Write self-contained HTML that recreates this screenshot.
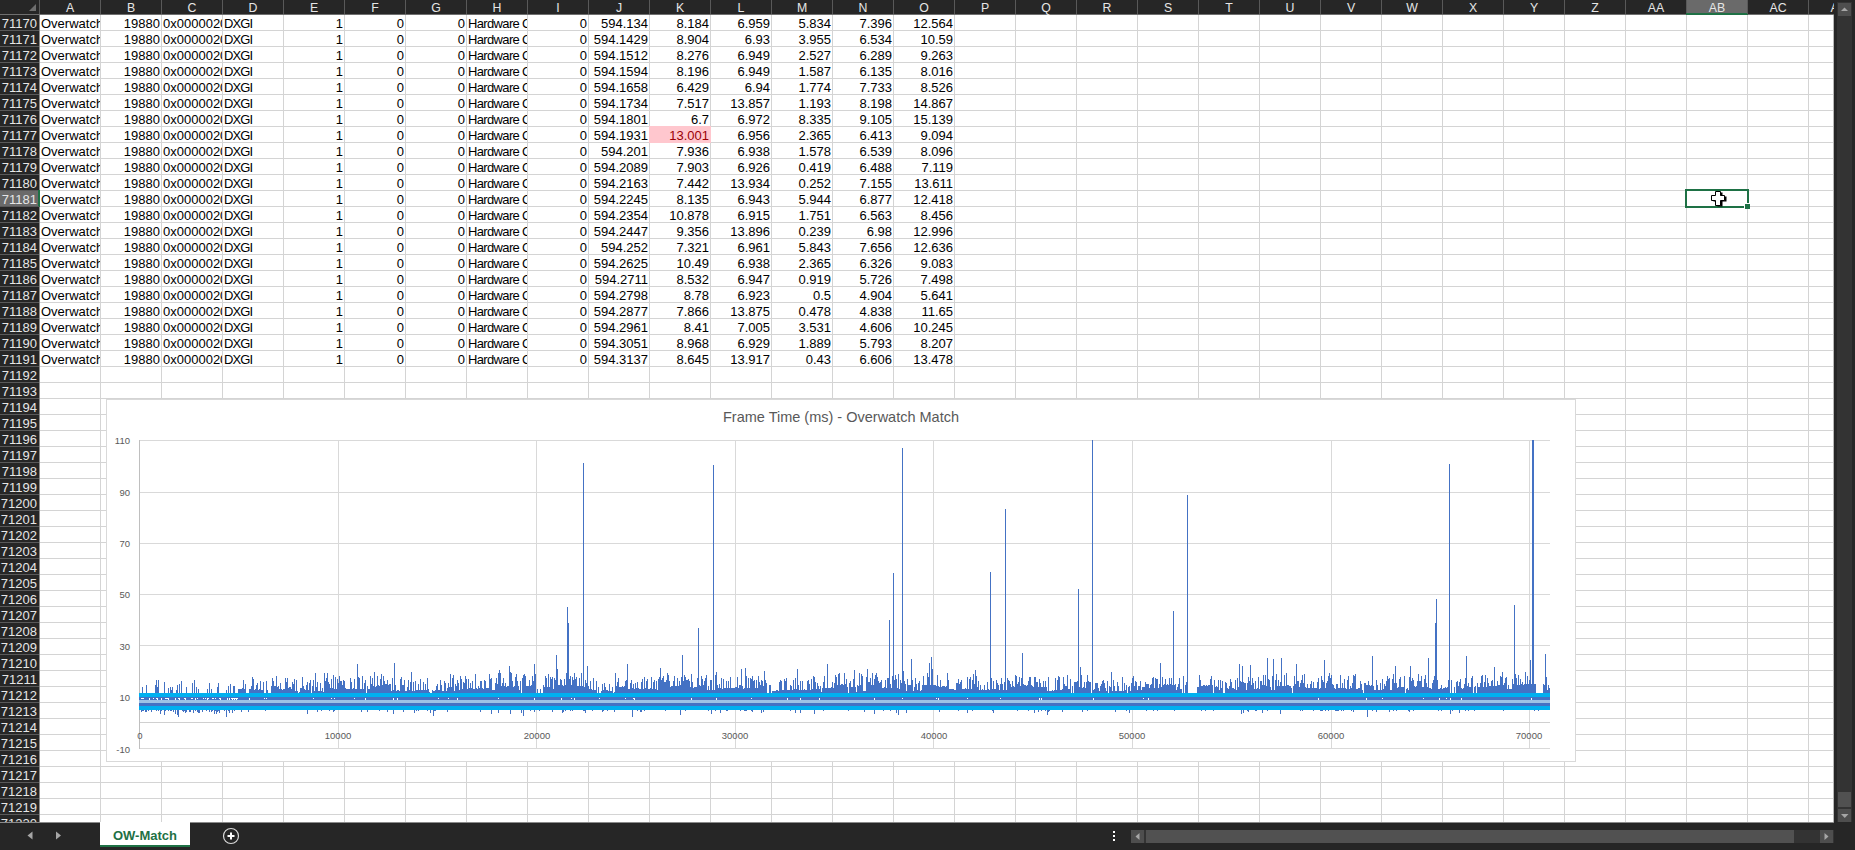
<!DOCTYPE html><html><head><meta charset="utf-8"><style>
*{margin:0;padding:0;box-sizing:border-box}
body{width:1855px;height:850px;overflow:hidden;position:relative;background:#262626;font-family:"Liberation Sans",sans-serif}
.a{position:absolute}
.c{position:absolute;height:16px;line-height:16px;font-size:13px;color:#000;white-space:nowrap;overflow:hidden}
.r{text-align:right}
.ch{position:absolute;top:1px;height:14px;line-height:14px;font-size:12.3px;color:#e6e6e6;text-align:center}
.rh{position:absolute;left:0;width:37px;height:16px;line-height:16px;font-size:13px;color:#e6e6e6;text-align:right}

</style></head><body>
<div class="a" style="left:40px;top:15px;width:1794px;height:807px;background-color:#fff;background-image:linear-gradient(to right,#d4d4d4 1px,transparent 1px),linear-gradient(to bottom,#d4d4d4 1px,transparent 1px);background-size:61px 16px;background-position:60px 15px"></div>
<div class="a" style="left:0;top:0;width:1834px;height:14px;background:#262626"></div>
<div class="a" style="left:0;top:14px;width:1834px;height:1px;background:#6f6f6f"></div>
<div class="a" style="left:39px;top:0;width:1px;height:14px;background:#595959"></div>
<div class="ch" style="left:40px;width:60px;overflow:hidden;clip-path:inset(0 0px 0 0)">A</div>
<div class="a" style="left:100px;top:0;width:1px;height:14px;background:#595959"></div>
<div class="ch" style="left:101px;width:60px;overflow:hidden;clip-path:inset(0 0px 0 0)">B</div>
<div class="a" style="left:161px;top:0;width:1px;height:14px;background:#595959"></div>
<div class="ch" style="left:162px;width:60px;overflow:hidden;clip-path:inset(0 0px 0 0)">C</div>
<div class="a" style="left:222px;top:0;width:1px;height:14px;background:#595959"></div>
<div class="ch" style="left:223px;width:60px;overflow:hidden;clip-path:inset(0 0px 0 0)">D</div>
<div class="a" style="left:283px;top:0;width:1px;height:14px;background:#595959"></div>
<div class="ch" style="left:284px;width:60px;overflow:hidden;clip-path:inset(0 0px 0 0)">E</div>
<div class="a" style="left:344px;top:0;width:1px;height:14px;background:#595959"></div>
<div class="ch" style="left:345px;width:60px;overflow:hidden;clip-path:inset(0 0px 0 0)">F</div>
<div class="a" style="left:405px;top:0;width:1px;height:14px;background:#595959"></div>
<div class="ch" style="left:406px;width:60px;overflow:hidden;clip-path:inset(0 0px 0 0)">G</div>
<div class="a" style="left:466px;top:0;width:1px;height:14px;background:#595959"></div>
<div class="ch" style="left:467px;width:60px;overflow:hidden;clip-path:inset(0 0px 0 0)">H</div>
<div class="a" style="left:527px;top:0;width:1px;height:14px;background:#595959"></div>
<div class="ch" style="left:528px;width:60px;overflow:hidden;clip-path:inset(0 0px 0 0)">I</div>
<div class="a" style="left:588px;top:0;width:1px;height:14px;background:#595959"></div>
<div class="ch" style="left:589px;width:60px;overflow:hidden;clip-path:inset(0 0px 0 0)">J</div>
<div class="a" style="left:649px;top:0;width:1px;height:14px;background:#595959"></div>
<div class="ch" style="left:650px;width:60px;overflow:hidden;clip-path:inset(0 0px 0 0)">K</div>
<div class="a" style="left:710px;top:0;width:1px;height:14px;background:#595959"></div>
<div class="ch" style="left:711px;width:60px;overflow:hidden;clip-path:inset(0 0px 0 0)">L</div>
<div class="a" style="left:771px;top:0;width:1px;height:14px;background:#595959"></div>
<div class="ch" style="left:772px;width:60px;overflow:hidden;clip-path:inset(0 0px 0 0)">M</div>
<div class="a" style="left:832px;top:0;width:1px;height:14px;background:#595959"></div>
<div class="ch" style="left:833px;width:60px;overflow:hidden;clip-path:inset(0 0px 0 0)">N</div>
<div class="a" style="left:893px;top:0;width:1px;height:14px;background:#595959"></div>
<div class="ch" style="left:894px;width:60px;overflow:hidden;clip-path:inset(0 0px 0 0)">O</div>
<div class="a" style="left:954px;top:0;width:1px;height:14px;background:#595959"></div>
<div class="ch" style="left:955px;width:60px;overflow:hidden;clip-path:inset(0 0px 0 0)">P</div>
<div class="a" style="left:1015px;top:0;width:1px;height:14px;background:#595959"></div>
<div class="ch" style="left:1016px;width:60px;overflow:hidden;clip-path:inset(0 0px 0 0)">Q</div>
<div class="a" style="left:1076px;top:0;width:1px;height:14px;background:#595959"></div>
<div class="ch" style="left:1077px;width:60px;overflow:hidden;clip-path:inset(0 0px 0 0)">R</div>
<div class="a" style="left:1137px;top:0;width:1px;height:14px;background:#595959"></div>
<div class="ch" style="left:1138px;width:60px;overflow:hidden;clip-path:inset(0 0px 0 0)">S</div>
<div class="a" style="left:1198px;top:0;width:1px;height:14px;background:#595959"></div>
<div class="ch" style="left:1199px;width:60px;overflow:hidden;clip-path:inset(0 0px 0 0)">T</div>
<div class="a" style="left:1259px;top:0;width:1px;height:14px;background:#595959"></div>
<div class="ch" style="left:1260px;width:60px;overflow:hidden;clip-path:inset(0 0px 0 0)">U</div>
<div class="a" style="left:1320px;top:0;width:1px;height:14px;background:#595959"></div>
<div class="ch" style="left:1321px;width:60px;overflow:hidden;clip-path:inset(0 0px 0 0)">V</div>
<div class="a" style="left:1381px;top:0;width:1px;height:14px;background:#595959"></div>
<div class="ch" style="left:1382px;width:60px;overflow:hidden;clip-path:inset(0 0px 0 0)">W</div>
<div class="a" style="left:1442px;top:0;width:1px;height:14px;background:#595959"></div>
<div class="ch" style="left:1443px;width:60px;overflow:hidden;clip-path:inset(0 0px 0 0)">X</div>
<div class="a" style="left:1503px;top:0;width:1px;height:14px;background:#595959"></div>
<div class="ch" style="left:1504px;width:60px;overflow:hidden;clip-path:inset(0 0px 0 0)">Y</div>
<div class="a" style="left:1564px;top:0;width:1px;height:14px;background:#595959"></div>
<div class="ch" style="left:1565px;width:60px;overflow:hidden;clip-path:inset(0 0px 0 0)">Z</div>
<div class="a" style="left:1625px;top:0;width:1px;height:14px;background:#595959"></div>
<div class="ch" style="left:1626px;width:60px;overflow:hidden;clip-path:inset(0 0px 0 0)">AA</div>
<div class="a" style="left:1686px;top:0;width:1px;height:14px;background:#595959"></div>
<div class="a" style="left:1687px;top:0;width:60px;height:13px;background:#6a6a6a"></div>
<div class="a" style="left:1686px;top:13px;width:62px;height:2px;background:#1e7145"></div>
<div class="ch" style="left:1687px;width:60px;overflow:hidden;clip-path:inset(0 0px 0 0)">AB</div>
<div class="a" style="left:1747px;top:0;width:1px;height:14px;background:#595959"></div>
<div class="ch" style="left:1748px;width:60px;overflow:hidden;clip-path:inset(0 0px 0 0)">AC</div>
<div class="a" style="left:1808px;top:0;width:1px;height:14px;background:#595959"></div>
<div class="ch" style="left:1809px;width:60px;overflow:hidden;clip-path:inset(0 35px 0 0)">AD</div>
<svg class="a" style="left:0;top:0" width="39" height="14"><polygon points="36,4 36,11 29,11" fill="#6e6e6e"/></svg>
<div class="a" style="left:0;top:15px;width:39px;height:807px;background:#262626"></div>
<div class="a" style="left:39px;top:15px;width:1px;height:807px;background:#8a8a8a"></div>
<div class="a" style="left:0;top:30px;width:39px;height:1px;background:#595959"></div>
<div class="rh" style="top:16px">71170</div>
<div class="a" style="left:0;top:46px;width:39px;height:1px;background:#595959"></div>
<div class="rh" style="top:32px">71171</div>
<div class="a" style="left:0;top:62px;width:39px;height:1px;background:#595959"></div>
<div class="rh" style="top:48px">71172</div>
<div class="a" style="left:0;top:78px;width:39px;height:1px;background:#595959"></div>
<div class="rh" style="top:64px">71173</div>
<div class="a" style="left:0;top:94px;width:39px;height:1px;background:#595959"></div>
<div class="rh" style="top:80px">71174</div>
<div class="a" style="left:0;top:110px;width:39px;height:1px;background:#595959"></div>
<div class="rh" style="top:96px">71175</div>
<div class="a" style="left:0;top:126px;width:39px;height:1px;background:#595959"></div>
<div class="rh" style="top:112px">71176</div>
<div class="a" style="left:0;top:142px;width:39px;height:1px;background:#595959"></div>
<div class="rh" style="top:128px">71177</div>
<div class="a" style="left:0;top:158px;width:39px;height:1px;background:#595959"></div>
<div class="rh" style="top:144px">71178</div>
<div class="a" style="left:0;top:174px;width:39px;height:1px;background:#595959"></div>
<div class="rh" style="top:160px">71179</div>
<div class="a" style="left:0;top:190px;width:39px;height:1px;background:#595959"></div>
<div class="rh" style="top:176px">71180</div>
<div class="a" style="left:0;top:191px;width:38px;height:15px;background:#6a6a6a"></div>
<div class="a" style="left:38px;top:190px;width:2px;height:17px;background:#1e7145"></div>
<div class="a" style="left:0;top:206px;width:39px;height:1px;background:#595959"></div>
<div class="rh" style="top:192px">71181</div>
<div class="a" style="left:0;top:222px;width:39px;height:1px;background:#595959"></div>
<div class="rh" style="top:208px">71182</div>
<div class="a" style="left:0;top:238px;width:39px;height:1px;background:#595959"></div>
<div class="rh" style="top:224px">71183</div>
<div class="a" style="left:0;top:254px;width:39px;height:1px;background:#595959"></div>
<div class="rh" style="top:240px">71184</div>
<div class="a" style="left:0;top:270px;width:39px;height:1px;background:#595959"></div>
<div class="rh" style="top:256px">71185</div>
<div class="a" style="left:0;top:286px;width:39px;height:1px;background:#595959"></div>
<div class="rh" style="top:272px">71186</div>
<div class="a" style="left:0;top:302px;width:39px;height:1px;background:#595959"></div>
<div class="rh" style="top:288px">71187</div>
<div class="a" style="left:0;top:318px;width:39px;height:1px;background:#595959"></div>
<div class="rh" style="top:304px">71188</div>
<div class="a" style="left:0;top:334px;width:39px;height:1px;background:#595959"></div>
<div class="rh" style="top:320px">71189</div>
<div class="a" style="left:0;top:350px;width:39px;height:1px;background:#595959"></div>
<div class="rh" style="top:336px">71190</div>
<div class="a" style="left:0;top:366px;width:39px;height:1px;background:#595959"></div>
<div class="rh" style="top:352px">71191</div>
<div class="a" style="left:0;top:382px;width:39px;height:1px;background:#595959"></div>
<div class="rh" style="top:368px">71192</div>
<div class="a" style="left:0;top:398px;width:39px;height:1px;background:#595959"></div>
<div class="rh" style="top:384px">71193</div>
<div class="a" style="left:0;top:414px;width:39px;height:1px;background:#595959"></div>
<div class="rh" style="top:400px">71194</div>
<div class="a" style="left:0;top:430px;width:39px;height:1px;background:#595959"></div>
<div class="rh" style="top:416px">71195</div>
<div class="a" style="left:0;top:446px;width:39px;height:1px;background:#595959"></div>
<div class="rh" style="top:432px">71196</div>
<div class="a" style="left:0;top:462px;width:39px;height:1px;background:#595959"></div>
<div class="rh" style="top:448px">71197</div>
<div class="a" style="left:0;top:478px;width:39px;height:1px;background:#595959"></div>
<div class="rh" style="top:464px">71198</div>
<div class="a" style="left:0;top:494px;width:39px;height:1px;background:#595959"></div>
<div class="rh" style="top:480px">71199</div>
<div class="a" style="left:0;top:510px;width:39px;height:1px;background:#595959"></div>
<div class="rh" style="top:496px">71200</div>
<div class="a" style="left:0;top:526px;width:39px;height:1px;background:#595959"></div>
<div class="rh" style="top:512px">71201</div>
<div class="a" style="left:0;top:542px;width:39px;height:1px;background:#595959"></div>
<div class="rh" style="top:528px">71202</div>
<div class="a" style="left:0;top:558px;width:39px;height:1px;background:#595959"></div>
<div class="rh" style="top:544px">71203</div>
<div class="a" style="left:0;top:574px;width:39px;height:1px;background:#595959"></div>
<div class="rh" style="top:560px">71204</div>
<div class="a" style="left:0;top:590px;width:39px;height:1px;background:#595959"></div>
<div class="rh" style="top:576px">71205</div>
<div class="a" style="left:0;top:606px;width:39px;height:1px;background:#595959"></div>
<div class="rh" style="top:592px">71206</div>
<div class="a" style="left:0;top:622px;width:39px;height:1px;background:#595959"></div>
<div class="rh" style="top:608px">71207</div>
<div class="a" style="left:0;top:638px;width:39px;height:1px;background:#595959"></div>
<div class="rh" style="top:624px">71208</div>
<div class="a" style="left:0;top:654px;width:39px;height:1px;background:#595959"></div>
<div class="rh" style="top:640px">71209</div>
<div class="a" style="left:0;top:670px;width:39px;height:1px;background:#595959"></div>
<div class="rh" style="top:656px">71210</div>
<div class="a" style="left:0;top:686px;width:39px;height:1px;background:#595959"></div>
<div class="rh" style="top:672px">71211</div>
<div class="a" style="left:0;top:702px;width:39px;height:1px;background:#595959"></div>
<div class="rh" style="top:688px">71212</div>
<div class="a" style="left:0;top:718px;width:39px;height:1px;background:#595959"></div>
<div class="rh" style="top:704px">71213</div>
<div class="a" style="left:0;top:734px;width:39px;height:1px;background:#595959"></div>
<div class="rh" style="top:720px">71214</div>
<div class="a" style="left:0;top:750px;width:39px;height:1px;background:#595959"></div>
<div class="rh" style="top:736px">71215</div>
<div class="a" style="left:0;top:766px;width:39px;height:1px;background:#595959"></div>
<div class="rh" style="top:752px">71216</div>
<div class="a" style="left:0;top:782px;width:39px;height:1px;background:#595959"></div>
<div class="rh" style="top:768px">71217</div>
<div class="a" style="left:0;top:798px;width:39px;height:1px;background:#595959"></div>
<div class="rh" style="top:784px">71218</div>
<div class="a" style="left:0;top:814px;width:39px;height:1px;background:#595959"></div>
<div class="rh" style="top:800px">71219</div>
<div class="a" style="left:0;top:830px;width:39px;height:1px;background:#595959"></div>
<div class="rh" style="top:816px">71220</div>
<div class="c" style="top:16px;left:40px;width:60px;padding-left:1px;">Overwatch.exe</div>
<div class="c r" style="top:16px;left:101px;width:60px;padding-right:1px;">19880</div>
<div class="c" style="top:16px;left:162px;width:60px;padding-left:1px;">0x0000020C</div>
<div class="c" style="top:16px;left:223px;width:60px;padding-left:1px;letter-spacing:-0.9px;">DXGI</div>
<div class="c r" style="top:16px;left:284px;width:60px;padding-right:1px;">1</div>
<div class="c r" style="top:16px;left:345px;width:60px;padding-right:1px;">0</div>
<div class="c r" style="top:16px;left:406px;width:60px;padding-right:1px;">0</div>
<div class="c" style="top:16px;left:467px;width:60px;padding-left:1px;letter-spacing:-0.65px;">Hardware Composed</div>
<div class="c r" style="top:16px;left:528px;width:60px;padding-right:1px;">0</div>
<div class="c r" style="top:16px;left:589px;width:60px;padding-right:1px;">594.134</div>
<div class="c r" style="top:16px;left:650px;width:60px;padding-right:1px;">8.184</div>
<div class="c r" style="top:16px;left:711px;width:60px;padding-right:1px;">6.959</div>
<div class="c r" style="top:16px;left:772px;width:60px;padding-right:1px;">5.834</div>
<div class="c r" style="top:16px;left:833px;width:60px;padding-right:1px;">7.396</div>
<div class="c r" style="top:16px;left:894px;width:60px;padding-right:1px;">12.564</div>
<div class="c" style="top:32px;left:40px;width:60px;padding-left:1px;">Overwatch.exe</div>
<div class="c r" style="top:32px;left:101px;width:60px;padding-right:1px;">19880</div>
<div class="c" style="top:32px;left:162px;width:60px;padding-left:1px;">0x0000020C</div>
<div class="c" style="top:32px;left:223px;width:60px;padding-left:1px;letter-spacing:-0.9px;">DXGI</div>
<div class="c r" style="top:32px;left:284px;width:60px;padding-right:1px;">1</div>
<div class="c r" style="top:32px;left:345px;width:60px;padding-right:1px;">0</div>
<div class="c r" style="top:32px;left:406px;width:60px;padding-right:1px;">0</div>
<div class="c" style="top:32px;left:467px;width:60px;padding-left:1px;letter-spacing:-0.65px;">Hardware Composed</div>
<div class="c r" style="top:32px;left:528px;width:60px;padding-right:1px;">0</div>
<div class="c r" style="top:32px;left:589px;width:60px;padding-right:1px;">594.1429</div>
<div class="c r" style="top:32px;left:650px;width:60px;padding-right:1px;">8.904</div>
<div class="c r" style="top:32px;left:711px;width:60px;padding-right:1px;">6.93</div>
<div class="c r" style="top:32px;left:772px;width:60px;padding-right:1px;">3.955</div>
<div class="c r" style="top:32px;left:833px;width:60px;padding-right:1px;">6.534</div>
<div class="c r" style="top:32px;left:894px;width:60px;padding-right:1px;">10.59</div>
<div class="c" style="top:48px;left:40px;width:60px;padding-left:1px;">Overwatch.exe</div>
<div class="c r" style="top:48px;left:101px;width:60px;padding-right:1px;">19880</div>
<div class="c" style="top:48px;left:162px;width:60px;padding-left:1px;">0x0000020C</div>
<div class="c" style="top:48px;left:223px;width:60px;padding-left:1px;letter-spacing:-0.9px;">DXGI</div>
<div class="c r" style="top:48px;left:284px;width:60px;padding-right:1px;">1</div>
<div class="c r" style="top:48px;left:345px;width:60px;padding-right:1px;">0</div>
<div class="c r" style="top:48px;left:406px;width:60px;padding-right:1px;">0</div>
<div class="c" style="top:48px;left:467px;width:60px;padding-left:1px;letter-spacing:-0.65px;">Hardware Composed</div>
<div class="c r" style="top:48px;left:528px;width:60px;padding-right:1px;">0</div>
<div class="c r" style="top:48px;left:589px;width:60px;padding-right:1px;">594.1512</div>
<div class="c r" style="top:48px;left:650px;width:60px;padding-right:1px;">8.276</div>
<div class="c r" style="top:48px;left:711px;width:60px;padding-right:1px;">6.949</div>
<div class="c r" style="top:48px;left:772px;width:60px;padding-right:1px;">2.527</div>
<div class="c r" style="top:48px;left:833px;width:60px;padding-right:1px;">6.289</div>
<div class="c r" style="top:48px;left:894px;width:60px;padding-right:1px;">9.263</div>
<div class="c" style="top:64px;left:40px;width:60px;padding-left:1px;">Overwatch.exe</div>
<div class="c r" style="top:64px;left:101px;width:60px;padding-right:1px;">19880</div>
<div class="c" style="top:64px;left:162px;width:60px;padding-left:1px;">0x0000020C</div>
<div class="c" style="top:64px;left:223px;width:60px;padding-left:1px;letter-spacing:-0.9px;">DXGI</div>
<div class="c r" style="top:64px;left:284px;width:60px;padding-right:1px;">1</div>
<div class="c r" style="top:64px;left:345px;width:60px;padding-right:1px;">0</div>
<div class="c r" style="top:64px;left:406px;width:60px;padding-right:1px;">0</div>
<div class="c" style="top:64px;left:467px;width:60px;padding-left:1px;letter-spacing:-0.65px;">Hardware Composed</div>
<div class="c r" style="top:64px;left:528px;width:60px;padding-right:1px;">0</div>
<div class="c r" style="top:64px;left:589px;width:60px;padding-right:1px;">594.1594</div>
<div class="c r" style="top:64px;left:650px;width:60px;padding-right:1px;">8.196</div>
<div class="c r" style="top:64px;left:711px;width:60px;padding-right:1px;">6.949</div>
<div class="c r" style="top:64px;left:772px;width:60px;padding-right:1px;">1.587</div>
<div class="c r" style="top:64px;left:833px;width:60px;padding-right:1px;">6.135</div>
<div class="c r" style="top:64px;left:894px;width:60px;padding-right:1px;">8.016</div>
<div class="c" style="top:80px;left:40px;width:60px;padding-left:1px;">Overwatch.exe</div>
<div class="c r" style="top:80px;left:101px;width:60px;padding-right:1px;">19880</div>
<div class="c" style="top:80px;left:162px;width:60px;padding-left:1px;">0x0000020C</div>
<div class="c" style="top:80px;left:223px;width:60px;padding-left:1px;letter-spacing:-0.9px;">DXGI</div>
<div class="c r" style="top:80px;left:284px;width:60px;padding-right:1px;">1</div>
<div class="c r" style="top:80px;left:345px;width:60px;padding-right:1px;">0</div>
<div class="c r" style="top:80px;left:406px;width:60px;padding-right:1px;">0</div>
<div class="c" style="top:80px;left:467px;width:60px;padding-left:1px;letter-spacing:-0.65px;">Hardware Composed</div>
<div class="c r" style="top:80px;left:528px;width:60px;padding-right:1px;">0</div>
<div class="c r" style="top:80px;left:589px;width:60px;padding-right:1px;">594.1658</div>
<div class="c r" style="top:80px;left:650px;width:60px;padding-right:1px;">6.429</div>
<div class="c r" style="top:80px;left:711px;width:60px;padding-right:1px;">6.94</div>
<div class="c r" style="top:80px;left:772px;width:60px;padding-right:1px;">1.774</div>
<div class="c r" style="top:80px;left:833px;width:60px;padding-right:1px;">7.733</div>
<div class="c r" style="top:80px;left:894px;width:60px;padding-right:1px;">8.526</div>
<div class="c" style="top:96px;left:40px;width:60px;padding-left:1px;">Overwatch.exe</div>
<div class="c r" style="top:96px;left:101px;width:60px;padding-right:1px;">19880</div>
<div class="c" style="top:96px;left:162px;width:60px;padding-left:1px;">0x0000020C</div>
<div class="c" style="top:96px;left:223px;width:60px;padding-left:1px;letter-spacing:-0.9px;">DXGI</div>
<div class="c r" style="top:96px;left:284px;width:60px;padding-right:1px;">1</div>
<div class="c r" style="top:96px;left:345px;width:60px;padding-right:1px;">0</div>
<div class="c r" style="top:96px;left:406px;width:60px;padding-right:1px;">0</div>
<div class="c" style="top:96px;left:467px;width:60px;padding-left:1px;letter-spacing:-0.65px;">Hardware Composed</div>
<div class="c r" style="top:96px;left:528px;width:60px;padding-right:1px;">0</div>
<div class="c r" style="top:96px;left:589px;width:60px;padding-right:1px;">594.1734</div>
<div class="c r" style="top:96px;left:650px;width:60px;padding-right:1px;">7.517</div>
<div class="c r" style="top:96px;left:711px;width:60px;padding-right:1px;">13.857</div>
<div class="c r" style="top:96px;left:772px;width:60px;padding-right:1px;">1.193</div>
<div class="c r" style="top:96px;left:833px;width:60px;padding-right:1px;">8.198</div>
<div class="c r" style="top:96px;left:894px;width:60px;padding-right:1px;">14.867</div>
<div class="c" style="top:112px;left:40px;width:60px;padding-left:1px;">Overwatch.exe</div>
<div class="c r" style="top:112px;left:101px;width:60px;padding-right:1px;">19880</div>
<div class="c" style="top:112px;left:162px;width:60px;padding-left:1px;">0x0000020C</div>
<div class="c" style="top:112px;left:223px;width:60px;padding-left:1px;letter-spacing:-0.9px;">DXGI</div>
<div class="c r" style="top:112px;left:284px;width:60px;padding-right:1px;">1</div>
<div class="c r" style="top:112px;left:345px;width:60px;padding-right:1px;">0</div>
<div class="c r" style="top:112px;left:406px;width:60px;padding-right:1px;">0</div>
<div class="c" style="top:112px;left:467px;width:60px;padding-left:1px;letter-spacing:-0.65px;">Hardware Composed</div>
<div class="c r" style="top:112px;left:528px;width:60px;padding-right:1px;">0</div>
<div class="c r" style="top:112px;left:589px;width:60px;padding-right:1px;">594.1801</div>
<div class="c r" style="top:112px;left:650px;width:60px;padding-right:1px;">6.7</div>
<div class="c r" style="top:112px;left:711px;width:60px;padding-right:1px;">6.972</div>
<div class="c r" style="top:112px;left:772px;width:60px;padding-right:1px;">8.335</div>
<div class="c r" style="top:112px;left:833px;width:60px;padding-right:1px;">9.105</div>
<div class="c r" style="top:112px;left:894px;width:60px;padding-right:1px;">15.139</div>
<div class="c" style="top:128px;left:40px;width:60px;padding-left:1px;">Overwatch.exe</div>
<div class="c r" style="top:128px;left:101px;width:60px;padding-right:1px;">19880</div>
<div class="c" style="top:128px;left:162px;width:60px;padding-left:1px;">0x0000020C</div>
<div class="c" style="top:128px;left:223px;width:60px;padding-left:1px;letter-spacing:-0.9px;">DXGI</div>
<div class="c r" style="top:128px;left:284px;width:60px;padding-right:1px;">1</div>
<div class="c r" style="top:128px;left:345px;width:60px;padding-right:1px;">0</div>
<div class="c r" style="top:128px;left:406px;width:60px;padding-right:1px;">0</div>
<div class="c" style="top:128px;left:467px;width:60px;padding-left:1px;letter-spacing:-0.65px;">Hardware Composed</div>
<div class="c r" style="top:128px;left:528px;width:60px;padding-right:1px;">0</div>
<div class="c r" style="top:128px;left:589px;width:60px;padding-right:1px;">594.1931</div>
<div class="a" style="left:649px;top:126px;width:62px;height:17px;background:#ffc7ce"></div>
<div class="c r" style="top:128px;left:650px;width:60px;padding-right:1px;color:#9c0006;">13.001</div>
<div class="c r" style="top:128px;left:711px;width:60px;padding-right:1px;">6.956</div>
<div class="c r" style="top:128px;left:772px;width:60px;padding-right:1px;">2.365</div>
<div class="c r" style="top:128px;left:833px;width:60px;padding-right:1px;">6.413</div>
<div class="c r" style="top:128px;left:894px;width:60px;padding-right:1px;">9.094</div>
<div class="c" style="top:144px;left:40px;width:60px;padding-left:1px;">Overwatch.exe</div>
<div class="c r" style="top:144px;left:101px;width:60px;padding-right:1px;">19880</div>
<div class="c" style="top:144px;left:162px;width:60px;padding-left:1px;">0x0000020C</div>
<div class="c" style="top:144px;left:223px;width:60px;padding-left:1px;letter-spacing:-0.9px;">DXGI</div>
<div class="c r" style="top:144px;left:284px;width:60px;padding-right:1px;">1</div>
<div class="c r" style="top:144px;left:345px;width:60px;padding-right:1px;">0</div>
<div class="c r" style="top:144px;left:406px;width:60px;padding-right:1px;">0</div>
<div class="c" style="top:144px;left:467px;width:60px;padding-left:1px;letter-spacing:-0.65px;">Hardware Composed</div>
<div class="c r" style="top:144px;left:528px;width:60px;padding-right:1px;">0</div>
<div class="c r" style="top:144px;left:589px;width:60px;padding-right:1px;">594.201</div>
<div class="c r" style="top:144px;left:650px;width:60px;padding-right:1px;">7.936</div>
<div class="c r" style="top:144px;left:711px;width:60px;padding-right:1px;">6.938</div>
<div class="c r" style="top:144px;left:772px;width:60px;padding-right:1px;">1.578</div>
<div class="c r" style="top:144px;left:833px;width:60px;padding-right:1px;">6.539</div>
<div class="c r" style="top:144px;left:894px;width:60px;padding-right:1px;">8.096</div>
<div class="c" style="top:160px;left:40px;width:60px;padding-left:1px;">Overwatch.exe</div>
<div class="c r" style="top:160px;left:101px;width:60px;padding-right:1px;">19880</div>
<div class="c" style="top:160px;left:162px;width:60px;padding-left:1px;">0x0000020C</div>
<div class="c" style="top:160px;left:223px;width:60px;padding-left:1px;letter-spacing:-0.9px;">DXGI</div>
<div class="c r" style="top:160px;left:284px;width:60px;padding-right:1px;">1</div>
<div class="c r" style="top:160px;left:345px;width:60px;padding-right:1px;">0</div>
<div class="c r" style="top:160px;left:406px;width:60px;padding-right:1px;">0</div>
<div class="c" style="top:160px;left:467px;width:60px;padding-left:1px;letter-spacing:-0.65px;">Hardware Composed</div>
<div class="c r" style="top:160px;left:528px;width:60px;padding-right:1px;">0</div>
<div class="c r" style="top:160px;left:589px;width:60px;padding-right:1px;">594.2089</div>
<div class="c r" style="top:160px;left:650px;width:60px;padding-right:1px;">7.903</div>
<div class="c r" style="top:160px;left:711px;width:60px;padding-right:1px;">6.926</div>
<div class="c r" style="top:160px;left:772px;width:60px;padding-right:1px;">0.419</div>
<div class="c r" style="top:160px;left:833px;width:60px;padding-right:1px;">6.488</div>
<div class="c r" style="top:160px;left:894px;width:60px;padding-right:1px;">7.119</div>
<div class="c" style="top:176px;left:40px;width:60px;padding-left:1px;">Overwatch.exe</div>
<div class="c r" style="top:176px;left:101px;width:60px;padding-right:1px;">19880</div>
<div class="c" style="top:176px;left:162px;width:60px;padding-left:1px;">0x0000020C</div>
<div class="c" style="top:176px;left:223px;width:60px;padding-left:1px;letter-spacing:-0.9px;">DXGI</div>
<div class="c r" style="top:176px;left:284px;width:60px;padding-right:1px;">1</div>
<div class="c r" style="top:176px;left:345px;width:60px;padding-right:1px;">0</div>
<div class="c r" style="top:176px;left:406px;width:60px;padding-right:1px;">0</div>
<div class="c" style="top:176px;left:467px;width:60px;padding-left:1px;letter-spacing:-0.65px;">Hardware Composed</div>
<div class="c r" style="top:176px;left:528px;width:60px;padding-right:1px;">0</div>
<div class="c r" style="top:176px;left:589px;width:60px;padding-right:1px;">594.2163</div>
<div class="c r" style="top:176px;left:650px;width:60px;padding-right:1px;">7.442</div>
<div class="c r" style="top:176px;left:711px;width:60px;padding-right:1px;">13.934</div>
<div class="c r" style="top:176px;left:772px;width:60px;padding-right:1px;">0.252</div>
<div class="c r" style="top:176px;left:833px;width:60px;padding-right:1px;">7.155</div>
<div class="c r" style="top:176px;left:894px;width:60px;padding-right:1px;">13.611</div>
<div class="c" style="top:192px;left:40px;width:60px;padding-left:1px;">Overwatch.exe</div>
<div class="c r" style="top:192px;left:101px;width:60px;padding-right:1px;">19880</div>
<div class="c" style="top:192px;left:162px;width:60px;padding-left:1px;">0x0000020C</div>
<div class="c" style="top:192px;left:223px;width:60px;padding-left:1px;letter-spacing:-0.9px;">DXGI</div>
<div class="c r" style="top:192px;left:284px;width:60px;padding-right:1px;">1</div>
<div class="c r" style="top:192px;left:345px;width:60px;padding-right:1px;">0</div>
<div class="c r" style="top:192px;left:406px;width:60px;padding-right:1px;">0</div>
<div class="c" style="top:192px;left:467px;width:60px;padding-left:1px;letter-spacing:-0.65px;">Hardware Composed</div>
<div class="c r" style="top:192px;left:528px;width:60px;padding-right:1px;">0</div>
<div class="c r" style="top:192px;left:589px;width:60px;padding-right:1px;">594.2245</div>
<div class="c r" style="top:192px;left:650px;width:60px;padding-right:1px;">8.135</div>
<div class="c r" style="top:192px;left:711px;width:60px;padding-right:1px;">6.943</div>
<div class="c r" style="top:192px;left:772px;width:60px;padding-right:1px;">5.944</div>
<div class="c r" style="top:192px;left:833px;width:60px;padding-right:1px;">6.877</div>
<div class="c r" style="top:192px;left:894px;width:60px;padding-right:1px;">12.418</div>
<div class="c" style="top:208px;left:40px;width:60px;padding-left:1px;">Overwatch.exe</div>
<div class="c r" style="top:208px;left:101px;width:60px;padding-right:1px;">19880</div>
<div class="c" style="top:208px;left:162px;width:60px;padding-left:1px;">0x0000020C</div>
<div class="c" style="top:208px;left:223px;width:60px;padding-left:1px;letter-spacing:-0.9px;">DXGI</div>
<div class="c r" style="top:208px;left:284px;width:60px;padding-right:1px;">1</div>
<div class="c r" style="top:208px;left:345px;width:60px;padding-right:1px;">0</div>
<div class="c r" style="top:208px;left:406px;width:60px;padding-right:1px;">0</div>
<div class="c" style="top:208px;left:467px;width:60px;padding-left:1px;letter-spacing:-0.65px;">Hardware Composed</div>
<div class="c r" style="top:208px;left:528px;width:60px;padding-right:1px;">0</div>
<div class="c r" style="top:208px;left:589px;width:60px;padding-right:1px;">594.2354</div>
<div class="c r" style="top:208px;left:650px;width:60px;padding-right:1px;">10.878</div>
<div class="c r" style="top:208px;left:711px;width:60px;padding-right:1px;">6.915</div>
<div class="c r" style="top:208px;left:772px;width:60px;padding-right:1px;">1.751</div>
<div class="c r" style="top:208px;left:833px;width:60px;padding-right:1px;">6.563</div>
<div class="c r" style="top:208px;left:894px;width:60px;padding-right:1px;">8.456</div>
<div class="c" style="top:224px;left:40px;width:60px;padding-left:1px;">Overwatch.exe</div>
<div class="c r" style="top:224px;left:101px;width:60px;padding-right:1px;">19880</div>
<div class="c" style="top:224px;left:162px;width:60px;padding-left:1px;">0x0000020C</div>
<div class="c" style="top:224px;left:223px;width:60px;padding-left:1px;letter-spacing:-0.9px;">DXGI</div>
<div class="c r" style="top:224px;left:284px;width:60px;padding-right:1px;">1</div>
<div class="c r" style="top:224px;left:345px;width:60px;padding-right:1px;">0</div>
<div class="c r" style="top:224px;left:406px;width:60px;padding-right:1px;">0</div>
<div class="c" style="top:224px;left:467px;width:60px;padding-left:1px;letter-spacing:-0.65px;">Hardware Composed</div>
<div class="c r" style="top:224px;left:528px;width:60px;padding-right:1px;">0</div>
<div class="c r" style="top:224px;left:589px;width:60px;padding-right:1px;">594.2447</div>
<div class="c r" style="top:224px;left:650px;width:60px;padding-right:1px;">9.356</div>
<div class="c r" style="top:224px;left:711px;width:60px;padding-right:1px;">13.896</div>
<div class="c r" style="top:224px;left:772px;width:60px;padding-right:1px;">0.239</div>
<div class="c r" style="top:224px;left:833px;width:60px;padding-right:1px;">6.98</div>
<div class="c r" style="top:224px;left:894px;width:60px;padding-right:1px;">12.996</div>
<div class="c" style="top:240px;left:40px;width:60px;padding-left:1px;">Overwatch.exe</div>
<div class="c r" style="top:240px;left:101px;width:60px;padding-right:1px;">19880</div>
<div class="c" style="top:240px;left:162px;width:60px;padding-left:1px;">0x0000020C</div>
<div class="c" style="top:240px;left:223px;width:60px;padding-left:1px;letter-spacing:-0.9px;">DXGI</div>
<div class="c r" style="top:240px;left:284px;width:60px;padding-right:1px;">1</div>
<div class="c r" style="top:240px;left:345px;width:60px;padding-right:1px;">0</div>
<div class="c r" style="top:240px;left:406px;width:60px;padding-right:1px;">0</div>
<div class="c" style="top:240px;left:467px;width:60px;padding-left:1px;letter-spacing:-0.65px;">Hardware Composed</div>
<div class="c r" style="top:240px;left:528px;width:60px;padding-right:1px;">0</div>
<div class="c r" style="top:240px;left:589px;width:60px;padding-right:1px;">594.252</div>
<div class="c r" style="top:240px;left:650px;width:60px;padding-right:1px;">7.321</div>
<div class="c r" style="top:240px;left:711px;width:60px;padding-right:1px;">6.961</div>
<div class="c r" style="top:240px;left:772px;width:60px;padding-right:1px;">5.843</div>
<div class="c r" style="top:240px;left:833px;width:60px;padding-right:1px;">7.656</div>
<div class="c r" style="top:240px;left:894px;width:60px;padding-right:1px;">12.636</div>
<div class="c" style="top:256px;left:40px;width:60px;padding-left:1px;">Overwatch.exe</div>
<div class="c r" style="top:256px;left:101px;width:60px;padding-right:1px;">19880</div>
<div class="c" style="top:256px;left:162px;width:60px;padding-left:1px;">0x0000020C</div>
<div class="c" style="top:256px;left:223px;width:60px;padding-left:1px;letter-spacing:-0.9px;">DXGI</div>
<div class="c r" style="top:256px;left:284px;width:60px;padding-right:1px;">1</div>
<div class="c r" style="top:256px;left:345px;width:60px;padding-right:1px;">0</div>
<div class="c r" style="top:256px;left:406px;width:60px;padding-right:1px;">0</div>
<div class="c" style="top:256px;left:467px;width:60px;padding-left:1px;letter-spacing:-0.65px;">Hardware Composed</div>
<div class="c r" style="top:256px;left:528px;width:60px;padding-right:1px;">0</div>
<div class="c r" style="top:256px;left:589px;width:60px;padding-right:1px;">594.2625</div>
<div class="c r" style="top:256px;left:650px;width:60px;padding-right:1px;">10.49</div>
<div class="c r" style="top:256px;left:711px;width:60px;padding-right:1px;">6.938</div>
<div class="c r" style="top:256px;left:772px;width:60px;padding-right:1px;">2.365</div>
<div class="c r" style="top:256px;left:833px;width:60px;padding-right:1px;">6.326</div>
<div class="c r" style="top:256px;left:894px;width:60px;padding-right:1px;">9.083</div>
<div class="c" style="top:272px;left:40px;width:60px;padding-left:1px;">Overwatch.exe</div>
<div class="c r" style="top:272px;left:101px;width:60px;padding-right:1px;">19880</div>
<div class="c" style="top:272px;left:162px;width:60px;padding-left:1px;">0x0000020C</div>
<div class="c" style="top:272px;left:223px;width:60px;padding-left:1px;letter-spacing:-0.9px;">DXGI</div>
<div class="c r" style="top:272px;left:284px;width:60px;padding-right:1px;">1</div>
<div class="c r" style="top:272px;left:345px;width:60px;padding-right:1px;">0</div>
<div class="c r" style="top:272px;left:406px;width:60px;padding-right:1px;">0</div>
<div class="c" style="top:272px;left:467px;width:60px;padding-left:1px;letter-spacing:-0.65px;">Hardware Composed</div>
<div class="c r" style="top:272px;left:528px;width:60px;padding-right:1px;">0</div>
<div class="c r" style="top:272px;left:589px;width:60px;padding-right:1px;">594.2711</div>
<div class="c r" style="top:272px;left:650px;width:60px;padding-right:1px;">8.532</div>
<div class="c r" style="top:272px;left:711px;width:60px;padding-right:1px;">6.947</div>
<div class="c r" style="top:272px;left:772px;width:60px;padding-right:1px;">0.919</div>
<div class="c r" style="top:272px;left:833px;width:60px;padding-right:1px;">5.726</div>
<div class="c r" style="top:272px;left:894px;width:60px;padding-right:1px;">7.498</div>
<div class="c" style="top:288px;left:40px;width:60px;padding-left:1px;">Overwatch.exe</div>
<div class="c r" style="top:288px;left:101px;width:60px;padding-right:1px;">19880</div>
<div class="c" style="top:288px;left:162px;width:60px;padding-left:1px;">0x0000020C</div>
<div class="c" style="top:288px;left:223px;width:60px;padding-left:1px;letter-spacing:-0.9px;">DXGI</div>
<div class="c r" style="top:288px;left:284px;width:60px;padding-right:1px;">1</div>
<div class="c r" style="top:288px;left:345px;width:60px;padding-right:1px;">0</div>
<div class="c r" style="top:288px;left:406px;width:60px;padding-right:1px;">0</div>
<div class="c" style="top:288px;left:467px;width:60px;padding-left:1px;letter-spacing:-0.65px;">Hardware Composed</div>
<div class="c r" style="top:288px;left:528px;width:60px;padding-right:1px;">0</div>
<div class="c r" style="top:288px;left:589px;width:60px;padding-right:1px;">594.2798</div>
<div class="c r" style="top:288px;left:650px;width:60px;padding-right:1px;">8.78</div>
<div class="c r" style="top:288px;left:711px;width:60px;padding-right:1px;">6.923</div>
<div class="c r" style="top:288px;left:772px;width:60px;padding-right:1px;">0.5</div>
<div class="c r" style="top:288px;left:833px;width:60px;padding-right:1px;">4.904</div>
<div class="c r" style="top:288px;left:894px;width:60px;padding-right:1px;">5.641</div>
<div class="c" style="top:304px;left:40px;width:60px;padding-left:1px;">Overwatch.exe</div>
<div class="c r" style="top:304px;left:101px;width:60px;padding-right:1px;">19880</div>
<div class="c" style="top:304px;left:162px;width:60px;padding-left:1px;">0x0000020C</div>
<div class="c" style="top:304px;left:223px;width:60px;padding-left:1px;letter-spacing:-0.9px;">DXGI</div>
<div class="c r" style="top:304px;left:284px;width:60px;padding-right:1px;">1</div>
<div class="c r" style="top:304px;left:345px;width:60px;padding-right:1px;">0</div>
<div class="c r" style="top:304px;left:406px;width:60px;padding-right:1px;">0</div>
<div class="c" style="top:304px;left:467px;width:60px;padding-left:1px;letter-spacing:-0.65px;">Hardware Composed</div>
<div class="c r" style="top:304px;left:528px;width:60px;padding-right:1px;">0</div>
<div class="c r" style="top:304px;left:589px;width:60px;padding-right:1px;">594.2877</div>
<div class="c r" style="top:304px;left:650px;width:60px;padding-right:1px;">7.866</div>
<div class="c r" style="top:304px;left:711px;width:60px;padding-right:1px;">13.875</div>
<div class="c r" style="top:304px;left:772px;width:60px;padding-right:1px;">0.478</div>
<div class="c r" style="top:304px;left:833px;width:60px;padding-right:1px;">4.838</div>
<div class="c r" style="top:304px;left:894px;width:60px;padding-right:1px;">11.65</div>
<div class="c" style="top:320px;left:40px;width:60px;padding-left:1px;">Overwatch.exe</div>
<div class="c r" style="top:320px;left:101px;width:60px;padding-right:1px;">19880</div>
<div class="c" style="top:320px;left:162px;width:60px;padding-left:1px;">0x0000020C</div>
<div class="c" style="top:320px;left:223px;width:60px;padding-left:1px;letter-spacing:-0.9px;">DXGI</div>
<div class="c r" style="top:320px;left:284px;width:60px;padding-right:1px;">1</div>
<div class="c r" style="top:320px;left:345px;width:60px;padding-right:1px;">0</div>
<div class="c r" style="top:320px;left:406px;width:60px;padding-right:1px;">0</div>
<div class="c" style="top:320px;left:467px;width:60px;padding-left:1px;letter-spacing:-0.65px;">Hardware Composed</div>
<div class="c r" style="top:320px;left:528px;width:60px;padding-right:1px;">0</div>
<div class="c r" style="top:320px;left:589px;width:60px;padding-right:1px;">594.2961</div>
<div class="c r" style="top:320px;left:650px;width:60px;padding-right:1px;">8.41</div>
<div class="c r" style="top:320px;left:711px;width:60px;padding-right:1px;">7.005</div>
<div class="c r" style="top:320px;left:772px;width:60px;padding-right:1px;">3.531</div>
<div class="c r" style="top:320px;left:833px;width:60px;padding-right:1px;">4.606</div>
<div class="c r" style="top:320px;left:894px;width:60px;padding-right:1px;">10.245</div>
<div class="c" style="top:336px;left:40px;width:60px;padding-left:1px;">Overwatch.exe</div>
<div class="c r" style="top:336px;left:101px;width:60px;padding-right:1px;">19880</div>
<div class="c" style="top:336px;left:162px;width:60px;padding-left:1px;">0x0000020C</div>
<div class="c" style="top:336px;left:223px;width:60px;padding-left:1px;letter-spacing:-0.9px;">DXGI</div>
<div class="c r" style="top:336px;left:284px;width:60px;padding-right:1px;">1</div>
<div class="c r" style="top:336px;left:345px;width:60px;padding-right:1px;">0</div>
<div class="c r" style="top:336px;left:406px;width:60px;padding-right:1px;">0</div>
<div class="c" style="top:336px;left:467px;width:60px;padding-left:1px;letter-spacing:-0.65px;">Hardware Composed</div>
<div class="c r" style="top:336px;left:528px;width:60px;padding-right:1px;">0</div>
<div class="c r" style="top:336px;left:589px;width:60px;padding-right:1px;">594.3051</div>
<div class="c r" style="top:336px;left:650px;width:60px;padding-right:1px;">8.968</div>
<div class="c r" style="top:336px;left:711px;width:60px;padding-right:1px;">6.929</div>
<div class="c r" style="top:336px;left:772px;width:60px;padding-right:1px;">1.889</div>
<div class="c r" style="top:336px;left:833px;width:60px;padding-right:1px;">5.793</div>
<div class="c r" style="top:336px;left:894px;width:60px;padding-right:1px;">8.207</div>
<div class="c" style="top:352px;left:40px;width:60px;padding-left:1px;">Overwatch.exe</div>
<div class="c r" style="top:352px;left:101px;width:60px;padding-right:1px;">19880</div>
<div class="c" style="top:352px;left:162px;width:60px;padding-left:1px;">0x0000020C</div>
<div class="c" style="top:352px;left:223px;width:60px;padding-left:1px;letter-spacing:-0.9px;">DXGI</div>
<div class="c r" style="top:352px;left:284px;width:60px;padding-right:1px;">1</div>
<div class="c r" style="top:352px;left:345px;width:60px;padding-right:1px;">0</div>
<div class="c r" style="top:352px;left:406px;width:60px;padding-right:1px;">0</div>
<div class="c" style="top:352px;left:467px;width:60px;padding-left:1px;letter-spacing:-0.65px;">Hardware Composed</div>
<div class="c r" style="top:352px;left:528px;width:60px;padding-right:1px;">0</div>
<div class="c r" style="top:352px;left:589px;width:60px;padding-right:1px;">594.3137</div>
<div class="c r" style="top:352px;left:650px;width:60px;padding-right:1px;">8.645</div>
<div class="c r" style="top:352px;left:711px;width:60px;padding-right:1px;">13.917</div>
<div class="c r" style="top:352px;left:772px;width:60px;padding-right:1px;">0.43</div>
<div class="c r" style="top:352px;left:833px;width:60px;padding-right:1px;">6.606</div>
<div class="c r" style="top:352px;left:894px;width:60px;padding-right:1px;">13.478</div>
<div class="a" style="left:1685px;top:189px;width:64px;height:19px;border:2px solid #1e7145"></div>
<div class="a" style="left:1744px;top:203px;width:6px;height:6px;background:#fff"></div>
<div class="a" style="left:1745px;top:204px;width:5px;height:5px;background:#1e7145"></div>
<svg class="a" style="left:1708px;top:188px" width="22" height="22" viewBox="0 0 22 22"><path d="M8.5 3.5h5v4h4v5h-4v5h-5v-5h-4v-5h4z" fill="#000" transform="translate(1,1)"/><path d="M7.5 3.5h5v4h4v5h-4v5h-5v-5h-4v-5h4z" fill="#fff" stroke="#000" stroke-width="1"/></svg>
<div class="a" style="left:0;top:822px;width:1855px;height:28px;background:#262626"></div>
<div class="a" style="left:0;top:822px;width:1834px;height:1px;background:#8a8a8a"></div>
<div class="a" style="left:1833px;top:15px;width:1px;height:807px;background:#b8b8b8"></div>
<div class="a" style="left:100px;top:822px;width:90px;height:23px;background:#fff"></div>
<div class="a" style="left:100px;top:845px;width:90px;height:2px;background:#1e7145"></div>
<div class="a" style="left:100px;top:828px;width:90px;height:16px;line-height:16px;text-align:center;font-size:13px;font-weight:bold;color:#1e7145">OW-Match</div>
<svg class="a" style="left:0;top:823px" width="260" height="27"><polygon points="32.5,8.5 32.5,16.5 27.5,12.5" fill="#a6a6a6"/><polygon points="56,8.5 56,16.5 61,12.5" fill="#a6a6a6"/><circle cx="231" cy="13" r="7.5" fill="none" stroke="#d9d9d9" stroke-width="1.2"/><path d="M231 9.5v7M227.5 13h7" stroke="#fff" stroke-width="2"/></svg>
<div class="a" style="left:1113px;top:831px;width:2px;height:2px;background:#fff"></div>
<div class="a" style="left:1113px;top:835px;width:2px;height:2px;background:#fff"></div>
<div class="a" style="left:1113px;top:839px;width:2px;height:2px;background:#fff"></div>
<div class="a" style="left:1131px;top:830px;width:703px;height:13px;background:#333"></div>
<div class="a" style="left:1131px;top:830px;width:13px;height:13px;background:#4e4e4e"></div>
<div class="a" style="left:1146px;top:830px;width:648px;height:13px;background:#515151"></div>
<div class="a" style="left:1820px;top:830px;width:13px;height:13px;background:#4e4e4e"></div>
<svg class="a" style="left:1131px;top:830px" width="703" height="13"><polygon points="8.5,3 8.5,10 4.5,6.5" fill="#a6a6a6"/><polygon points="693.5,3 693.5,10 697.5,6.5" fill="#a6a6a6"/></svg>
<div class="a" style="left:1837px;top:2px;width:15px;height:820px;background:#333"></div>
<div class="a" style="left:1838px;top:3px;width:13px;height:13px;background:#4e4e4e"></div>
<div class="a" style="left:1838px;top:792px;width:13px;height:15px;background:#515151"></div>
<div class="a" style="left:1838px;top:809px;width:13px;height:13px;background:#4e4e4e"></div>
<svg class="a" style="left:1838px;top:3px" width="13" height="819"><polygon points="3,8 10,8 6.5,4.5" fill="#a6a6a6"/><polygon points="3,811 10.5,811 6.75,815" fill="#a6a6a6"/></svg>
<div class="a" style="left:106px;top:399px;width:1470px;height:363px;background:#fff;border:1px solid #d9d9d9"></div>
<div class="a" style="left:106px;top:409px;width:1470px;text-align:center;font-size:14.5px;line-height:16px;color:#595959">Frame Time (ms) - Overwatch Match</div>
<svg class="a" style="left:0;top:0" width="1855" height="850" shape-rendering="crispEdges">
<line x1="139" y1="440.5" x2="1550" y2="440.5" stroke="#d9d9d9" stroke-width="1"/>
<line x1="139" y1="492.5" x2="1550" y2="492.5" stroke="#d9d9d9" stroke-width="1"/>
<line x1="139" y1="543.5" x2="1550" y2="543.5" stroke="#d9d9d9" stroke-width="1"/>
<line x1="139" y1="594.5" x2="1550" y2="594.5" stroke="#d9d9d9" stroke-width="1"/>
<line x1="139" y1="645.5" x2="1550" y2="645.5" stroke="#d9d9d9" stroke-width="1"/>
<line x1="139" y1="697.5" x2="1550" y2="697.5" stroke="#d9d9d9" stroke-width="1"/>
<line x1="139" y1="748.5" x2="1550" y2="748.5" stroke="#d9d9d9" stroke-width="1"/>
<line x1="338.5" y1="440" x2="338.5" y2="749" stroke="#d9d9d9" stroke-width="1"/>
<line x1="536.5" y1="440" x2="536.5" y2="749" stroke="#d9d9d9" stroke-width="1"/>
<line x1="735.5" y1="440" x2="735.5" y2="749" stroke="#d9d9d9" stroke-width="1"/>
<line x1="933.5" y1="440" x2="933.5" y2="749" stroke="#d9d9d9" stroke-width="1"/>
<line x1="1132.5" y1="440" x2="1132.5" y2="749" stroke="#d9d9d9" stroke-width="1"/>
<line x1="1331.5" y1="440" x2="1331.5" y2="749" stroke="#d9d9d9" stroke-width="1"/>
<line x1="1529.5" y1="440" x2="1529.5" y2="749" stroke="#d9d9d9" stroke-width="1"/>
<line x1="139" y1="722.5" x2="1550" y2="722.5" stroke="#d0d0d0" stroke-width="1"/>
<line x1="139.5" y1="440" x2="139.5" y2="749" stroke="#bfbfbf" stroke-width="1"/>
<path d="M141.5 710V712 M142.5 693V687 M142.5 710V711 M143.5 710V711 M145.5 710V712 M146.5 693V685 M146.5 710V712 M148.5 710V711 M151.5 710V712 M155.5 693V685 M156.5 693V680 M156.5 710V711 M157.5 693V687 M158.5 693V680 M158.5 710V711 M160.5 710V714 M161.5 710V711 M164.5 693V682 M164.5 710V715 M165.5 710V711 M168.5 693V688 M168.5 710V711 M170.5 693V687 M170.5 710V711 M171.5 693V690 M171.5 710V711 M172.5 693V687 M173.5 710V712 M175.5 710V714 M176.5 693V690 M177.5 693V685 M177.5 710V715 M178.5 710V717 M179.5 693V684 M181.5 693V681 M182.5 710V711 M183.5 710V712 M184.5 710V711 M185.5 710V713 M186.5 693V687 M186.5 710V712 M189.5 710V712 M190.5 710V712 M192.5 693V683 M193.5 710V713 M194.5 693V680 M195.5 710V711 M196.5 693V687 M197.5 710V712 M198.5 693V689 M198.5 710V713 M199.5 710V713 M202.5 710V712 M206.5 710V711 M207.5 693V689 M209.5 693V683 M209.5 710V712 M211.5 693V689 M211.5 710V712 M212.5 710V711 M214.5 710V714 M215.5 710V711 M216.5 710V714 M217.5 693V687 M217.5 710V712 M218.5 693V683 M218.5 710V711 M219.5 710V713 M224.5 710V711 M226.5 693V690 M226.5 710V717 M228.5 693V686 M228.5 710V711 M229.5 710V713 M230.5 693V684 M232.5 710V713 M233.5 693V686 M234.5 693V686 M234.5 710V711 M238.5 693V689 M239.5 693V689 M240.5 693V689 M241.5 693V689 M241.5 710V712 M242.5 693V688 M243.5 693V680 M244.5 693V689 M245.5 693V684 M248.5 710V712 M249.5 693V689 M250.5 693V689 M251.5 693V686 M252.5 693V677 M253.5 693V679 M254.5 693V690 M255.5 693V689 M256.5 693V685 M257.5 693V683 M258.5 693V690 M259.5 693V689 M260.5 693V681 M261.5 693V690 M262.5 693V690 M263.5 693V682 M265.5 710V711 M266.5 693V681 M267.5 693V690 M271.5 693V686 M272.5 693V678 M273.5 693V681 M274.5 693V686 M275.5 693V686 M276.5 693V676 M277.5 693V687 M278.5 693V686 M279.5 693V689 M280.5 693V683 M281.5 693V689 M282.5 693V690 M283.5 693V689 M284.5 693V689 M285.5 693V678 M286.5 693V682 M287.5 693V678 M288.5 693V688 M289.5 693V687 M290.5 693V687 M291.5 693V689 M292.5 693V682 M293.5 693V684 M294.5 693V679 M295.5 693V691 M296.5 693V680 M297.5 693V691 M299.5 693V692 M300.5 693V688 M301.5 693V688 M302.5 693V677 M303.5 693V686 M304.5 693V689 M305.5 693V690 M306.5 693V685 M307.5 693V682 M307.5 710V714 M308.5 693V690 M309.5 693V683 M310.5 693V680 M312.5 693V686 M313.5 693V680 M314.5 693V691 M315.5 693V673 M316.5 693V687 M317.5 693V682 M317.5 710V712 M318.5 693V691 M319.5 693V691 M320.5 693V683 M321.5 693V691 M321.5 710V711 M322.5 693V688 M323.5 693V692 M324.5 693V673 M325.5 693V681 M326.5 693V678 M327.5 693V673 M328.5 693V682 M329.5 693V684 M329.5 710V711 M330.5 693V688 M331.5 693V679 M332.5 693V688 M333.5 693V675 M333.5 710V712 M334.5 693V689 M334.5 710V711 M335.5 693V677 M336.5 693V689 M337.5 693V679 M338.5 693V683 M339.5 693V676 M340.5 693V681 M341.5 693V681 M342.5 693V685 M343.5 693V680 M344.5 693V681 M345.5 693V688 M346.5 693V689 M347.5 693V689 M348.5 693V689 M349.5 693V689 M350.5 693V678 M351.5 693V682 M352.5 693V689 M353.5 693V688 M354.5 693V679 M355.5 693V689 M356.5 693V689 M357.5 693V664 M358.5 693V677 M359.5 693V678 M360.5 693V689 M361.5 693V689 M361.5 710V712 M362.5 693V676 M363.5 693V689 M364.5 693V683 M365.5 693V680 M367.5 693V686 M367.5 710V712 M368.5 693V689 M369.5 693V689 M370.5 693V676 M371.5 693V684 M372.5 693V678 M373.5 693V686 M374.5 693V672 M375.5 693V687 M376.5 693V686 M377.5 693V676 M378.5 693V685 M379.5 693V686 M379.5 710V711 M380.5 693V679 M381.5 693V674 M382.5 693V685 M383.5 693V676 M384.5 693V681 M385.5 693V684 M386.5 693V684 M387.5 693V680 M387.5 710V712 M388.5 693V685 M389.5 693V684 M390.5 693V684 M391.5 693V691 M392.5 693V678 M393.5 693V690 M393.5 710V714 M394.5 693V663 M395.5 693V685 M396.5 693V691 M397.5 693V690 M398.5 693V690 M399.5 693V691 M400.5 693V679 M401.5 693V677 M402.5 693V685 M403.5 693V685 M403.5 710V712 M404.5 693V680 M405.5 693V691 M406.5 693V691 M407.5 693V687 M408.5 693V680 M409.5 693V690 M410.5 693V682 M411.5 693V672 M412.5 693V691 M413.5 693V682 M414.5 693V691 M414.5 710V713 M415.5 693V681 M416.5 693V690 M416.5 710V711 M417.5 693V690 M418.5 693V684 M418.5 710V711 M419.5 693V690 M420.5 693V679 M421.5 693V690 M422.5 693V690 M423.5 693V682 M424.5 693V690 M425.5 693V684 M426.5 693V690 M427.5 693V678 M427.5 710V711 M428.5 693V689 M429.5 693V692 M430.5 710V713 M432.5 693V690 M433.5 693V691 M433.5 710V716 M434.5 693V691 M434.5 710V711 M435.5 693V690 M435.5 710V711 M436.5 693V686 M437.5 693V684 M438.5 693V690 M439.5 693V690 M440.5 693V680 M441.5 693V685 M442.5 693V691 M443.5 693V691 M444.5 693V681 M445.5 693V683 M446.5 693V691 M447.5 693V688 M447.5 710V712 M448.5 693V683 M449.5 693V687 M450.5 693V674 M451.5 693V687 M452.5 693V678 M453.5 693V675 M454.5 693V691 M455.5 693V684 M456.5 693V686 M457.5 693V680 M458.5 693V683 M459.5 693V690 M460.5 693V676 M461.5 693V679 M462.5 693V689 M463.5 693V682 M464.5 693V683 M465.5 693V676 M466.5 693V679 M467.5 693V689 M468.5 693V679 M469.5 693V688 M470.5 693V683 M471.5 693V688 M472.5 693V681 M473.5 693V689 M474.5 693V689 M475.5 693V674 M476.5 693V688 M477.5 693V689 M478.5 693V686 M479.5 693V688 M480.5 693V681 M480.5 710V712 M481.5 693V681 M482.5 693V688 M483.5 693V689 M484.5 693V680 M485.5 693V681 M486.5 693V688 M487.5 693V688 M488.5 693V688 M489.5 693V674 M490.5 693V679 M491.5 693V678 M491.5 710V714 M492.5 693V690 M493.5 693V690 M494.5 693V690 M495.5 693V683 M496.5 693V678 M497.5 693V684 M498.5 693V673 M498.5 710V713 M499.5 693V670 M500.5 693V673 M501.5 693V686 M502.5 693V683 M503.5 693V678 M504.5 693V686 M505.5 693V683 M506.5 693V687 M507.5 693V686 M508.5 693V686 M509.5 693V666 M510.5 693V672 M510.5 710V714 M511.5 693V673 M512.5 693V681 M513.5 693V687 M514.5 693V686 M515.5 693V677 M516.5 693V674 M517.5 693V681 M518.5 693V686 M519.5 693V690 M520.5 693V681 M521.5 710V713 M522.5 693V678 M523.5 693V675 M523.5 710V716 M524.5 693V674 M525.5 693V676 M526.5 693V686 M527.5 693V686 M528.5 693V686 M529.5 693V680 M530.5 693V686 M530.5 710V711 M531.5 693V685 M532.5 693V676 M533.5 693V681 M534.5 693V664 M534.5 710V712 M535.5 693V674 M537.5 693V689 M539.5 710V711 M540.5 693V689 M543.5 693V685 M544.5 693V687 M545.5 693V676 M546.5 693V678 M547.5 693V687 M548.5 693V674 M549.5 693V687 M550.5 693V677 M551.5 693V679 M552.5 693V677 M552.5 710V712 M553.5 693V689 M554.5 693V678 M555.5 693V680 M556.5 693V686 M557.5 693V669 M558.5 693V685 M559.5 693V685 M560.5 693V679 M561.5 693V680 M562.5 693V685 M562.5 710V713 M563.5 693V686 M563.5 710V712 M564.5 693V679 M565.5 693V685 M565.5 710V711 M566.5 693V673 M567.5 693V686 M568.5 693V681 M569.5 693V679 M570.5 693V676 M570.5 710V711 M571.5 693V685 M572.5 693V677 M572.5 710V711 M573.5 693V680 M574.5 693V673 M575.5 693V679 M576.5 693V677 M577.5 693V686 M578.5 693V686 M579.5 693V678 M580.5 693V686 M581.5 693V673 M582.5 693V686 M583.5 693V686 M583.5 710V711 M584.5 693V687 M584.5 710V711 M585.5 693V680 M585.5 710V713 M586.5 693V683 M587.5 693V666 M588.5 693V686 M589.5 693V689 M590.5 693V681 M591.5 693V689 M592.5 693V690 M592.5 710V711 M593.5 693V678 M594.5 693V690 M595.5 693V690 M596.5 693V681 M598.5 693V687 M601.5 693V691 M602.5 693V684 M602.5 710V712 M603.5 693V690 M603.5 710V711 M604.5 693V683 M605.5 693V687 M606.5 693V690 M607.5 693V690 M607.5 710V711 M608.5 693V691 M609.5 693V684 M610.5 693V691 M611.5 693V691 M612.5 693V687 M614.5 693V692 M614.5 710V712 M615.5 693V673 M616.5 693V686 M617.5 693V682 M618.5 693V678 M619.5 693V687 M620.5 693V687 M621.5 693V687 M622.5 693V686 M623.5 693V687 M624.5 693V686 M625.5 693V681 M626.5 693V680 M627.5 693V677 M628.5 693V689 M629.5 693V689 M630.5 693V683 M631.5 693V680 M632.5 693V688 M632.5 710V717 M633.5 693V684 M634.5 693V689 M635.5 693V683 M636.5 693V688 M637.5 693V682 M637.5 710V711 M638.5 693V688 M639.5 693V689 M640.5 693V689 M640.5 710V712 M641.5 693V682 M641.5 710V712 M642.5 693V679 M643.5 693V689 M644.5 693V677 M644.5 710V711 M645.5 693V688 M646.5 693V681 M647.5 693V679 M648.5 693V689 M649.5 693V689 M650.5 693V688 M651.5 693V677 M652.5 693V689 M653.5 693V682 M654.5 693V680 M655.5 693V689 M656.5 693V681 M657.5 693V690 M658.5 693V679 M659.5 693V677 M660.5 693V668 M661.5 693V680 M662.5 693V678 M663.5 693V676 M664.5 693V682 M665.5 693V682 M665.5 710V711 M666.5 693V680 M667.5 693V673 M668.5 693V675 M669.5 693V681 M670.5 693V687 M671.5 693V686 M672.5 693V686 M673.5 693V681 M674.5 693V676 M675.5 693V686 M676.5 693V686 M677.5 693V678 M678.5 693V686 M679.5 693V681 M680.5 693V685 M680.5 710V715 M681.5 693V677 M682.5 693V667 M683.5 693V681 M684.5 693V675 M685.5 693V677 M685.5 710V711 M686.5 693V680 M687.5 693V680 M688.5 693V679 M689.5 693V681 M690.5 693V687 M691.5 693V674 M692.5 693V682 M693.5 693V688 M694.5 693V687 M695.5 693V687 M696.5 693V687 M697.5 693V678 M698.5 693V675 M699.5 693V685 M700.5 693V686 M701.5 693V676 M702.5 693V679 M703.5 693V685 M704.5 693V681 M705.5 693V678 M706.5 693V675 M707.5 693V690 M708.5 693V686 M708.5 710V711 M709.5 693V690 M710.5 693V680 M711.5 693V680 M711.5 710V714 M712.5 693V690 M713.5 693V691 M714.5 693V690 M715.5 693V675 M715.5 710V711 M716.5 693V672 M717.5 693V685 M718.5 693V688 M719.5 693V684 M720.5 693V688 M720.5 710V713 M721.5 693V678 M722.5 693V689 M723.5 693V679 M724.5 693V688 M725.5 693V688 M726.5 693V681 M726.5 710V711 M727.5 693V688 M727.5 710V711 M728.5 693V681 M729.5 693V688 M730.5 693V677 M731.5 693V688 M732.5 693V688 M733.5 693V688 M734.5 693V688 M735.5 693V687 M736.5 693V687 M737.5 693V677 M738.5 693V688 M739.5 693V685 M740.5 693V685 M740.5 710V711 M741.5 693V669 M742.5 693V686 M743.5 693V689 M744.5 693V688 M744.5 710V711 M745.5 693V668 M745.5 710V711 M746.5 693V676 M746.5 710V711 M747.5 693V688 M748.5 693V678 M749.5 693V688 M750.5 693V678 M751.5 693V679 M751.5 710V711 M752.5 693V676 M752.5 710V712 M753.5 693V681 M754.5 693V680 M755.5 693V688 M756.5 693V680 M757.5 693V688 M758.5 693V676 M759.5 693V682 M760.5 693V685 M761.5 693V680 M761.5 710V713 M762.5 693V681 M763.5 693V686 M763.5 710V712 M764.5 693V671 M765.5 693V680 M766.5 693V683 M769.5 693V685 M770.5 693V685 M772.5 693V691 M773.5 693V691 M774.5 693V691 M775.5 693V691 M776.5 693V690 M777.5 693V690 M778.5 693V691 M779.5 693V682 M780.5 693V680 M781.5 693V681 M782.5 693V690 M783.5 693V690 M784.5 693V679 M785.5 693V681 M786.5 693V678 M787.5 693V690 M788.5 693V690 M789.5 693V690 M790.5 693V685 M790.5 710V711 M791.5 693V686 M792.5 693V690 M793.5 693V680 M794.5 693V689 M795.5 693V678 M795.5 710V713 M796.5 693V689 M797.5 693V669 M798.5 693V685 M799.5 693V690 M800.5 693V681 M800.5 710V713 M801.5 693V690 M802.5 693V681 M803.5 693V690 M804.5 693V689 M805.5 693V690 M806.5 693V690 M807.5 693V681 M808.5 693V680 M809.5 693V684 M810.5 693V690 M811.5 693V679 M812.5 693V689 M813.5 693V676 M814.5 693V677 M814.5 710V714 M815.5 693V682 M816.5 693V689 M817.5 693V683 M818.5 693V686 M819.5 693V689 M820.5 693V686 M821.5 693V692 M822.5 693V688 M823.5 693V682 M823.5 710V711 M824.5 693V676 M825.5 693V688 M826.5 693V688 M827.5 693V675 M828.5 693V688 M829.5 693V688 M830.5 693V688 M831.5 693V687 M832.5 693V682 M833.5 693V688 M834.5 693V683 M835.5 693V675 M836.5 693V677 M837.5 693V685 M838.5 693V674 M839.5 693V673 M840.5 693V685 M841.5 693V684 M842.5 693V684 M843.5 693V685 M844.5 693V673 M845.5 693V684 M846.5 693V679 M847.5 693V687 M848.5 710V711 M849.5 693V683 M850.5 693V681 M851.5 693V687 M852.5 693V687 M853.5 693V679 M854.5 693V670 M855.5 693V687 M856.5 693V692 M857.5 693V685 M858.5 693V686 M859.5 693V673 M860.5 693V685 M861.5 693V674 M862.5 693V676 M863.5 693V691 M864.5 693V691 M864.5 710V712 M865.5 693V691 M866.5 693V677 M867.5 693V669 M868.5 693V682 M869.5 693V682 M870.5 693V678 M871.5 693V685 M872.5 693V673 M873.5 693V685 M874.5 693V679 M874.5 710V714 M875.5 693V675 M876.5 693V673 M877.5 693V677 M878.5 693V681 M879.5 693V683 M880.5 693V682 M881.5 693V680 M882.5 693V688 M883.5 693V688 M883.5 710V711 M884.5 693V687 M885.5 693V680 M886.5 693V688 M887.5 693V678 M888.5 693V678 M889.5 693V688 M890.5 693V684 M890.5 710V711 M891.5 693V688 M892.5 693V676 M893.5 693V689 M894.5 693V680 M895.5 693V675 M896.5 693V679 M896.5 710V713 M897.5 693V688 M898.5 693V674 M898.5 710V715 M899.5 693V689 M900.5 693V680 M901.5 693V683 M902.5 693V688 M903.5 693V671 M904.5 693V681 M905.5 693V684 M906.5 693V691 M906.5 710V713 M907.5 693V679 M908.5 693V685 M909.5 693V685 M910.5 693V685 M911.5 693V682 M912.5 693V680 M913.5 693V691 M914.5 693V687 M915.5 693V678 M916.5 693V684 M917.5 693V690 M918.5 693V683 M919.5 693V681 M920.5 693V691 M921.5 693V690 M922.5 693V685 M923.5 693V676 M924.5 693V685 M925.5 693V685 M926.5 693V685 M927.5 693V673 M928.5 693V677 M929.5 693V663 M930.5 693V685 M931.5 693V678 M932.5 693V669 M933.5 693V685 M934.5 693V685 M935.5 693V685 M936.5 693V686 M937.5 693V675 M938.5 693V686 M939.5 693V687 M939.5 710V712 M940.5 693V680 M941.5 693V687 M942.5 693V686 M943.5 693V686 M944.5 693V686 M945.5 693V687 M946.5 693V686 M947.5 693V673 M948.5 693V680 M949.5 693V689 M950.5 693V689 M951.5 693V689 M952.5 693V689 M953.5 693V689 M954.5 693V690 M955.5 693V690 M956.5 693V683 M957.5 693V683 M958.5 693V679 M958.5 710V711 M959.5 693V684 M960.5 693V682 M961.5 693V680 M962.5 693V689 M963.5 693V689 M964.5 693V689 M965.5 693V688 M966.5 693V689 M967.5 693V677 M967.5 710V713 M968.5 693V689 M969.5 693V679 M970.5 693V677 M971.5 693V689 M972.5 693V680 M972.5 710V711 M973.5 693V674 M974.5 693V684 M975.5 693V670 M976.5 693V676 M977.5 693V687 M978.5 693V681 M979.5 693V690 M980.5 693V685 M981.5 693V690 M982.5 693V689 M983.5 693V690 M984.5 693V685 M985.5 693V690 M986.5 693V690 M987.5 693V682 M988.5 693V689 M989.5 693V690 M990.5 693V686 M991.5 693V678 M992.5 693V689 M992.5 710V711 M993.5 693V681 M993.5 710V713 M994.5 693V689 M995.5 693V689 M996.5 693V680 M997.5 693V683 M998.5 693V685 M999.5 693V690 M1000.5 693V684 M1001.5 693V678 M1002.5 693V684 M1003.5 693V690 M1004.5 693V682 M1005.5 693V691 M1006.5 693V690 M1007.5 693V678 M1008.5 693V680 M1009.5 693V681 M1010.5 693V684 M1011.5 693V687 M1012.5 693V681 M1013.5 693V686 M1014.5 693V687 M1015.5 693V675 M1016.5 693V676 M1017.5 693V684 M1017.5 710V711 M1018.5 693V682 M1019.5 693V677 M1020.5 693V686 M1021.5 693V678 M1022.5 693V681 M1023.5 693V684 M1024.5 693V685 M1025.5 693V685 M1026.5 693V686 M1027.5 693V685 M1028.5 693V681 M1028.5 710V711 M1029.5 693V677 M1030.5 693V677 M1031.5 693V685 M1032.5 693V686 M1033.5 693V687 M1034.5 693V677 M1034.5 710V713 M1035.5 693V677 M1036.5 693V682 M1037.5 693V682 M1038.5 693V687 M1038.5 710V712 M1039.5 693V679 M1040.5 693V683 M1041.5 693V687 M1041.5 710V711 M1042.5 693V687 M1043.5 693V681 M1044.5 693V687 M1045.5 693V681 M1045.5 710V711 M1046.5 693V687 M1047.5 693V691 M1047.5 710V715 M1048.5 693V677 M1048.5 710V712 M1049.5 693V691 M1049.5 710V711 M1050.5 693V691 M1051.5 693V691 M1052.5 693V690 M1053.5 693V691 M1054.5 693V690 M1055.5 693V678 M1056.5 693V690 M1057.5 693V680 M1058.5 693V676 M1059.5 693V677 M1060.5 693V690 M1061.5 693V690 M1062.5 693V689 M1062.5 710V712 M1063.5 693V677 M1064.5 693V684 M1065.5 693V686 M1066.5 693V686 M1067.5 693V675 M1068.5 693V689 M1069.5 693V689 M1070.5 693V679 M1072.5 693V686 M1074.5 693V682 M1075.5 693V682 M1076.5 693V682 M1077.5 693V681 M1078.5 693V684 M1079.5 693V687 M1080.5 693V667 M1081.5 693V675 M1082.5 693V688 M1082.5 710V712 M1083.5 693V687 M1084.5 693V682 M1085.5 693V688 M1086.5 693V682 M1087.5 693V675 M1087.5 710V711 M1088.5 693V681 M1089.5 693V682 M1090.5 693V682 M1092.5 693V681 M1093.5 693V690 M1094.5 693V689 M1095.5 693V683 M1096.5 693V683 M1097.5 693V683 M1098.5 693V688 M1099.5 693V691 M1100.5 693V686 M1101.5 693V684 M1102.5 693V681 M1103.5 693V680 M1104.5 693V683 M1105.5 693V688 M1106.5 693V691 M1107.5 693V681 M1109.5 693V686 M1110.5 693V687 M1111.5 693V672 M1112.5 693V691 M1113.5 693V680 M1114.5 693V686 M1115.5 693V691 M1115.5 710V712 M1116.5 693V691 M1117.5 693V682 M1118.5 693V686 M1119.5 693V691 M1120.5 693V691 M1121.5 693V691 M1122.5 693V677 M1123.5 693V691 M1124.5 693V683 M1125.5 693V690 M1126.5 693V685 M1126.5 710V711 M1128.5 693V687 M1129.5 693V686 M1129.5 710V713 M1130.5 693V691 M1131.5 693V683 M1132.5 693V678 M1133.5 693V676 M1134.5 693V686 M1135.5 693V681 M1136.5 693V682 M1137.5 693V690 M1138.5 693V686 M1139.5 693V686 M1140.5 693V681 M1141.5 693V690 M1142.5 693V687 M1143.5 693V687 M1144.5 693V687 M1145.5 693V682 M1146.5 693V684 M1146.5 710V711 M1147.5 693V684 M1148.5 693V684 M1149.5 693V688 M1150.5 693V685 M1151.5 693V684 M1152.5 693V678 M1153.5 693V677 M1153.5 710V711 M1154.5 693V688 M1155.5 693V678 M1156.5 693V679 M1157.5 693V679 M1157.5 710V711 M1158.5 693V688 M1159.5 693V684 M1160.5 693V663 M1161.5 693V687 M1162.5 693V677 M1163.5 693V685 M1164.5 693V684 M1165.5 693V679 M1166.5 693V685 M1167.5 693V684 M1168.5 693V685 M1169.5 693V678 M1170.5 693V684 M1171.5 693V678 M1172.5 693V685 M1173.5 693V684 M1174.5 693V685 M1174.5 710V711 M1175.5 693V684 M1176.5 693V690 M1177.5 693V687 M1178.5 693V684 M1179.5 693V678 M1180.5 693V689 M1181.5 693V689 M1183.5 693V676 M1185.5 693V685 M1186.5 693V682 M1187.5 693V687 M1197.5 693V687 M1198.5 693V687 M1199.5 693V675 M1200.5 693V680 M1201.5 693V686 M1201.5 710V711 M1202.5 693V686 M1203.5 693V685 M1204.5 693V685 M1205.5 693V686 M1205.5 710V711 M1206.5 693V685 M1207.5 693V686 M1208.5 693V685 M1209.5 693V685 M1210.5 693V679 M1211.5 693V676 M1212.5 693V685 M1213.5 710V711 M1214.5 693V680 M1215.5 693V687 M1216.5 693V686 M1217.5 693V687 M1218.5 693V680 M1219.5 693V690 M1220.5 693V680 M1221.5 693V688 M1222.5 693V681 M1225.5 693V682 M1226.5 693V683 M1227.5 693V688 M1228.5 693V689 M1229.5 693V686 M1230.5 693V679 M1231.5 693V682 M1232.5 693V688 M1233.5 693V688 M1234.5 693V689 M1235.5 693V680 M1236.5 693V690 M1237.5 693V678 M1238.5 693V687 M1239.5 693V691 M1240.5 693V681 M1241.5 693V682 M1241.5 710V714 M1242.5 693V666 M1243.5 693V682 M1243.5 710V713 M1244.5 693V683 M1245.5 693V683 M1246.5 693V690 M1247.5 693V683 M1247.5 710V711 M1248.5 693V677 M1248.5 710V712 M1249.5 693V681 M1250.5 693V665 M1251.5 693V685 M1252.5 693V678 M1253.5 693V683 M1254.5 693V689 M1255.5 693V681 M1255.5 710V711 M1256.5 693V689 M1256.5 710V711 M1257.5 693V688 M1258.5 693V677 M1259.5 693V689 M1260.5 693V681 M1261.5 693V681 M1262.5 693V685 M1262.5 710V713 M1263.5 693V675 M1264.5 693V685 M1265.5 693V675 M1266.5 693V686 M1267.5 693V685 M1267.5 710V711 M1268.5 693V679 M1269.5 693V680 M1270.5 693V687 M1271.5 693V690 M1272.5 693V676 M1273.5 693V690 M1274.5 693V690 M1275.5 693V680 M1276.5 693V674 M1277.5 693V686 M1278.5 693V680 M1279.5 693V686 M1280.5 693V682 M1280.5 710V714 M1281.5 693V678 M1282.5 693V686 M1283.5 693V686 M1284.5 693V675 M1285.5 693V686 M1286.5 693V673 M1287.5 693V685 M1288.5 693V685 M1289.5 693V686 M1290.5 693V686 M1291.5 693V688 M1293.5 693V686 M1294.5 693V676 M1295.5 693V684 M1296.5 693V682 M1297.5 693V681 M1298.5 693V681 M1299.5 693V687 M1300.5 693V683 M1300.5 710V711 M1301.5 693V680 M1302.5 693V675 M1302.5 710V711 M1303.5 693V683 M1304.5 693V674 M1305.5 693V687 M1306.5 693V688 M1307.5 693V684 M1308.5 693V688 M1309.5 693V688 M1310.5 693V684 M1311.5 693V681 M1312.5 693V688 M1313.5 693V682 M1313.5 710V711 M1314.5 693V688 M1315.5 693V688 M1316.5 693V688 M1317.5 693V682 M1318.5 693V678 M1319.5 693V689 M1320.5 693V688 M1320.5 710V711 M1321.5 693V676 M1321.5 710V711 M1322.5 693V680 M1322.5 710V711 M1323.5 693V682 M1324.5 693V687 M1325.5 693V688 M1325.5 710V711 M1326.5 693V683 M1327.5 693V681 M1328.5 693V676 M1328.5 710V711 M1329.5 693V673 M1330.5 693V678 M1331.5 693V675 M1332.5 693V684 M1333.5 693V685 M1334.5 693V688 M1335.5 693V689 M1335.5 710V711 M1336.5 693V684 M1336.5 710V711 M1337.5 693V684 M1337.5 710V711 M1338.5 693V688 M1338.5 710V711 M1339.5 693V688 M1340.5 693V675 M1341.5 693V688 M1341.5 710V711 M1342.5 693V683 M1343.5 693V688 M1343.5 710V711 M1344.5 693V679 M1345.5 693V688 M1346.5 693V689 M1347.5 693V680 M1348.5 693V676 M1349.5 693V689 M1350.5 693V686 M1351.5 693V688 M1351.5 710V711 M1352.5 693V683 M1353.5 693V675 M1353.5 710V712 M1354.5 693V676 M1355.5 693V674 M1356.5 693V689 M1357.5 693V689 M1358.5 693V688 M1359.5 693V688 M1360.5 693V681 M1361.5 693V684 M1362.5 693V690 M1364.5 693V683 M1365.5 693V683 M1366.5 693V685 M1367.5 693V685 M1367.5 710V717 M1368.5 693V681 M1369.5 693V685 M1370.5 693V686 M1371.5 693V685 M1372.5 693V686 M1372.5 710V711 M1373.5 693V686 M1374.5 693V690 M1375.5 693V690 M1376.5 693V680 M1376.5 710V712 M1377.5 693V685 M1378.5 693V690 M1379.5 693V690 M1380.5 693V683 M1381.5 693V690 M1382.5 693V679 M1383.5 693V689 M1384.5 693V684 M1385.5 693V686 M1386.5 693V681 M1387.5 693V676 M1388.5 693V679 M1389.5 693V678 M1389.5 710V712 M1390.5 693V690 M1391.5 693V690 M1392.5 693V679 M1393.5 693V674 M1393.5 710V711 M1394.5 693V683 M1395.5 693V687 M1396.5 693V683 M1396.5 710V711 M1397.5 693V688 M1398.5 693V687 M1399.5 693V679 M1400.5 693V677 M1401.5 693V687 M1402.5 693V687 M1403.5 693V687 M1404.5 693V676 M1406.5 693V689 M1407.5 693V688 M1408.5 693V690 M1408.5 710V711 M1409.5 693V677 M1409.5 710V712 M1410.5 693V666 M1411.5 693V681 M1412.5 693V678 M1413.5 693V680 M1413.5 710V711 M1414.5 693V686 M1415.5 693V687 M1416.5 693V686 M1417.5 693V681 M1418.5 693V674 M1419.5 693V681 M1420.5 693V681 M1421.5 693V676 M1422.5 693V687 M1423.5 693V687 M1424.5 693V679 M1425.5 693V675 M1426.5 693V683 M1427.5 693V687 M1428.5 693V687 M1429.5 693V688 M1430.5 693V688 M1431.5 693V689 M1432.5 693V683 M1433.5 693V680 M1434.5 693V676 M1435.5 693V682 M1436.5 693V689 M1437.5 693V680 M1438.5 693V689 M1438.5 710V711 M1439.5 693V689 M1440.5 693V688 M1441.5 693V685 M1441.5 710V711 M1442.5 693V689 M1443.5 693V688 M1444.5 693V688 M1445.5 693V687 M1446.5 693V688 M1447.5 693V687 M1448.5 693V680 M1449.5 693V677 M1450.5 710V714 M1451.5 693V680 M1452.5 710V711 M1454.5 693V687 M1456.5 693V682 M1457.5 693V681 M1458.5 693V686 M1459.5 693V682 M1459.5 710V713 M1460.5 693V679 M1461.5 693V688 M1462.5 693V689 M1463.5 693V688 M1464.5 693V684 M1465.5 693V678 M1465.5 710V711 M1466.5 693V680 M1467.5 693V686 M1468.5 693V683 M1468.5 710V711 M1469.5 693V687 M1470.5 693V687 M1471.5 693V678 M1472.5 693V676 M1474.5 693V687 M1474.5 710V711 M1475.5 693V686 M1477.5 693V683 M1478.5 693V687 M1479.5 693V687 M1480.5 693V683 M1481.5 693V676 M1482.5 693V675 M1483.5 693V687 M1484.5 693V682 M1485.5 693V675 M1486.5 693V687 M1487.5 693V678 M1488.5 693V683 M1489.5 693V686 M1490.5 693V686 M1491.5 693V681 M1492.5 693V680 M1493.5 693V686 M1494.5 693V686 M1495.5 693V686 M1496.5 693V686 M1497.5 693V681 M1498.5 693V685 M1499.5 693V685 M1500.5 693V676 M1501.5 693V677 M1502.5 693V672 M1503.5 693V685 M1503.5 710V711 M1504.5 693V683 M1505.5 693V678 M1506.5 693V677 M1507.5 693V689 M1508.5 693V685 M1509.5 693V689 M1510.5 693V689 M1511.5 693V689 M1512.5 693V679 M1513.5 693V684 M1514.5 693V687 M1515.5 693V674 M1516.5 693V678 M1517.5 693V685 M1518.5 693V675 M1519.5 693V685 M1520.5 693V679 M1521.5 693V684 M1522.5 693V682 M1523.5 693V685 M1524.5 693V684 M1525.5 693V672 M1526.5 693V684 M1527.5 693V676 M1528.5 693V684 M1529.5 693V680 M1530.5 693V685 M1531.5 693V684 M1532.5 693V681 M1533.5 693V678 M1534.5 693V684 M1534.5 710V711 M1535.5 693V684 M1538.5 710V711 M1543.5 693V684 M1544.5 693V685 M1545.5 693V672 M1546.5 693V677 M1547.5 693V690 M1548.5 693V685 M1549.5 693V688 M556.5 693V655 M567.5 693V607 M568.5 693V623 M583.5 693V463 M627.5 693V664 M682.5 693V655 M698.5 693V628 M713.5 693V465 M827.5 693V664 M889.5 693V620 M893.5 693V573 M902.5 693V448 M911.5 693V659 M931.5 693V657 M990.5 693V572 M1005.5 693V509 M1022.5 693V653 M1078.5 693V589 M1092.5 693V440 M1173.5 693V611 M1187.5 693V495 M1239.5 693V664 M1267.5 693V658 M1273.5 693V659 M1281.5 693V658 M1296.5 693V664 M1324.5 693V660 M1372.5 693V656 M1428.5 693V658 M1435.5 693V623 M1436.5 693V599 M1449.5 693V464 M1466.5 693V656 M1514.5 693V605 M1532.5 693V440 M1533.5 693V440 M1545.5 693V654 M1530.5 693V660 M1494.5 693V667 M1395.5 693V666" stroke="#4472c4" stroke-width="1" fill="none"/>
<rect x="139" y="693" width="1411" height="4" fill="#00b0f0"/>
<rect x="139" y="697" width="1411" height="3" fill="#4472c4"/>
<rect x="139" y="700" width="1411" height="3" fill="#9dc3e6"/>
<rect x="139" y="703" width="1411" height="3" fill="#4472c4"/>
<rect x="139" y="706" width="1411" height="4" fill="#00b0f0"/>
<path d="M141.5 697.5V698.5 M142.5 697.5V698.5 M143.5 697.5V698.5 M149.5 697.5V699.5 M153.5 697.5V698.5 M156.5 697.5V698.5 M157.5 697.5V699.5 M161.5 697.5V699.5 M165.5 697.5V698.5 M166.5 697.5V698.5 M167.5 697.5V698.5 M168.5 697.5V699.5 M175.5 697.5V699.5 M178.5 697.5V698.5 M179.5 697.5V699.5 M184.5 697.5V698.5 M185.5 697.5V699.5 M191.5 697.5V698.5 M192.5 697.5V698.5 M195.5 697.5V699.5 M197.5 697.5V698.5 M203.5 697.5V698.5 M205.5 697.5V698.5 M207.5 697.5V699.5 M208.5 697.5V698.5 M212.5 697.5V698.5 M213.5 697.5V698.5 M215.5 697.5V698.5 M219.5 697.5V698.5 M220.5 697.5V699.5 M227.5 697.5V699.5 M229.5 697.5V699.5 M231.5 697.5V698.5 M232.5 697.5V699.5 M233.5 697.5V698.5 M234.5 697.5V699.5 M235.5 697.5V698.5 M236.5 697.5V699.5 M237.5 697.5V698.5 M249.5 697.5V699.5 M264.5 697.5V698.5 M266.5 697.5V698.5 M313.5 697.5V698.5 M331.5 697.5V698.5 M334.5 697.5V698.5 M354.5 697.5V698.5 M365.5 697.5V699.5 M393.5 697.5V699.5 M397.5 697.5V699.5 M438.5 697.5V698.5 M448.5 697.5V698.5 M457.5 697.5V699.5 M498.5 697.5V698.5 M534.5 697.5V699.5 M561.5 697.5V699.5 M571.5 697.5V698.5 M574.5 697.5V699.5 M599.5 697.5V698.5 M625.5 697.5V698.5 M633.5 697.5V698.5 M634.5 697.5V699.5 M691.5 697.5V699.5 M716.5 697.5V699.5 M751.5 697.5V698.5 M787.5 697.5V699.5 M800.5 697.5V699.5 M819.5 697.5V699.5 M874.5 697.5V699.5 M902.5 697.5V698.5 M936.5 697.5V698.5 M938.5 697.5V699.5 M967.5 697.5V698.5 M1000.5 697.5V698.5 M1039.5 697.5V699.5 M1041.5 697.5V699.5 M1093.5 697.5V699.5 M1143.5 697.5V698.5 M1148.5 697.5V699.5 M1318.5 697.5V699.5 M1366.5 697.5V699.5 M1382.5 697.5V698.5 M1423.5 697.5V698.5 M1439.5 697.5V699.5 M1446.5 697.5V698.5 M1450.5 697.5V699.5 M1461.5 697.5V699.5 M1531.5 697.5V699.5" stroke="#fff" stroke-width="1"/>
</svg>
<div class="a" style="left:100px;top:435px;width:30px;text-align:right;font-size:9.5px;line-height:12px;color:#595959">110</div>
<div class="a" style="left:100px;top:487px;width:30px;text-align:right;font-size:9.5px;line-height:12px;color:#595959">90</div>
<div class="a" style="left:100px;top:538px;width:30px;text-align:right;font-size:9.5px;line-height:12px;color:#595959">70</div>
<div class="a" style="left:100px;top:589px;width:30px;text-align:right;font-size:9.5px;line-height:12px;color:#595959">50</div>
<div class="a" style="left:100px;top:641px;width:30px;text-align:right;font-size:9.5px;line-height:12px;color:#595959">30</div>
<div class="a" style="left:100px;top:692px;width:30px;text-align:right;font-size:9.5px;line-height:12px;color:#595959">10</div>
<div class="a" style="left:100px;top:744px;width:30px;text-align:right;font-size:9.5px;line-height:12px;color:#595959">-10</div>
<div class="a" style="left:100px;top:730px;width:80px;text-align:center;font-size:9.5px;line-height:12px;color:#595959">0</div>
<div class="a" style="left:298px;top:730px;width:80px;text-align:center;font-size:9.5px;line-height:12px;color:#595959">10000</div>
<div class="a" style="left:497px;top:730px;width:80px;text-align:center;font-size:9.5px;line-height:12px;color:#595959">20000</div>
<div class="a" style="left:695px;top:730px;width:80px;text-align:center;font-size:9.5px;line-height:12px;color:#595959">30000</div>
<div class="a" style="left:894px;top:730px;width:80px;text-align:center;font-size:9.5px;line-height:12px;color:#595959">40000</div>
<div class="a" style="left:1092px;top:730px;width:80px;text-align:center;font-size:9.5px;line-height:12px;color:#595959">50000</div>
<div class="a" style="left:1291px;top:730px;width:80px;text-align:center;font-size:9.5px;line-height:12px;color:#595959">60000</div>
<div class="a" style="left:1489px;top:730px;width:80px;text-align:center;font-size:9.5px;line-height:12px;color:#595959">70000</div>
</body></html>
